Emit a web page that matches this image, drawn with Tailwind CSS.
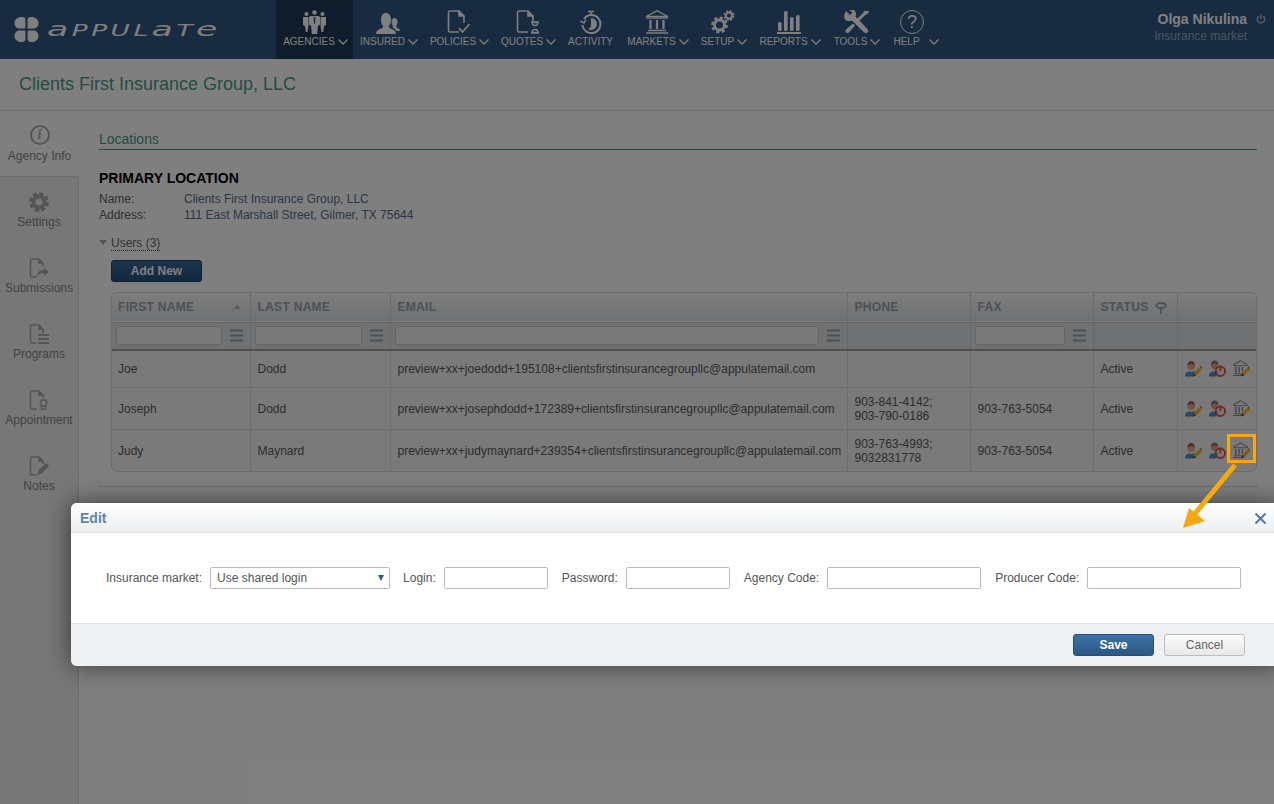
<!doctype html>
<html lang="en">
<head>
<meta charset="utf-8">
<title>Appulate</title>
<script src="https://cdn.jsdelivr.net/npm/@tailwindcss/browser@4"></script>
</head>
<body class="relative h-[804px] w-[1274px] overflow-hidden bg-white font-['Liberation_Sans',Arial,sans-serif] text-xs text-[#666]">

<svg class="absolute h-0 w-0" aria-hidden="true">
  <symbol id="person-edit" viewBox="0 0 18 18">
    <path d="M0 17.500c0-4 3-5 5-5.500l2 1 2-1c1 .3 2 .8 3 1.800l-3 3.700z" fill="#4a90d0"/>
    <circle cx="6.500" cy="6.500" r="4" fill="#e2ac86"/>
    <path d="M2.500 5.500c0-3 2-4.500 4-4.500s4 1.500 4 4.500c-2-1.500-5-1.500-8 0z" fill="#946a4e"/>
    <path d="M8 17.500l1-3.800 6-6 2.800 2.800-6 6z" fill="#f5bc2c"/>
    <path d="M8 17.500l1-3.800 2.800 2.800z" fill="#555"/>
    <path d="M15.500 7.200l1-1 2.500 2.500-1 1.200z" fill="#e2604f"/>
  </symbol>
  <symbol id="person-off" viewBox="0 0 18 18">
    <path d="M0 17.500c0-4 3-5 4.500-5.500l2 1 2-1 1 .5-2 5z" fill="#4a90d0"/>
    <circle cx="6" cy="5.500" r="4" fill="#d8aa8c"/>
    <path d="M2 5c0-3 2-4.500 4-4.500s4 1.500 4 4.500c-2-1.500-5-1.500-8 0z" fill="#8c7a6e"/>
    <circle cx="12" cy="12" r="5" fill="none" stroke="#e8503f" stroke-width="2"/>
    <path d="M12 5.500V12" stroke="#e8503f" stroke-width="2"/>
  </symbol>
  <symbol id="bank-edit" viewBox="0 0 18 18">
    <path d="M8 .8L1 4.800V6h14V4.800z" fill="none" stroke="#8c8c8c" stroke-width="1.100"/>
    <path d="M3 7.500v6M6.500 7.500v6M10 7.500v5" stroke="#8c8c8c" stroke-width="1.500"/>
    <path d="M1 14.500h9M0 16.500h9" stroke="#8c8c8c" stroke-width="1.100"/>
    <path d="M8.500 17.500l1-3.800 6-6 2.500 2.500-6 6z" fill="#f5bc2c"/>
    <path d="M8.500 17.500l1-3.800 2.500 2.500z" fill="#555"/>
    <path d="M15.500 7.700l1-1 2 2-1 1.200z" fill="#e2604f"/>
  </symbol>
  <symbol id="menu-lines" viewBox="0 0 13 13">
    <path d="M0 1.500h13M0 6.500h13M0 11.500h13" stroke="#9a9ea3" stroke-width="2"/>
  </symbol>
  <symbol id="chev" viewBox="0 0 10 6">
    <path d="M.5.500L5 5 9.500.500" fill="none" stroke="#fff" stroke-width="1.300"/>
  </symbol>
</svg>

<header class="flex h-[59px] bg-[#305682]">
  <div class="flex w-[276px] items-center pl-[14px]">
    <svg class="h-[25px] w-[25px]" viewBox="1 1 23 23" fill="#fff" aria-hidden="true">
      <path d="M11.500 11.500H5.500a5 5 0 0 1-1-9.500 5 5 0 0 1 7 .5z"/>
      <path d="M13.500 11.500h6a5 5 0 0 0 1-9.500 5 5 0 0 0-7 .5z"/>
      <path d="M11.500 13.500H5.500a5 5 0 0 0-1 9.500 5 5 0 0 0 7-.5z"/>
      <path d="M13.500 13.500h6a5 5 0 0 1 1 9.500 5 5 0 0 1-7-.5z"/>
    </svg>
    <span class="ml-2 origin-left whitespace-nowrap font-['DejaVu_Sans',sans-serif] text-[19px] italic leading-none tracking-[2.500px] text-white [transform:scale(1.39,.8)]"><span class="text-[25px]">a</span>PPUL<span class="text-[25px]">a</span>T<span class="text-[25px]">e</span></span>
  </div>
  <nav class="flex text-[10px] uppercase text-white [&>a>span:has(svg)]:ml-[2px]">
    <a class="flex w-[77px] flex-col items-center bg-[#1c3856] pt-[10px]">
      <svg class="h-[24px] w-[25px]" viewBox="0 0 25 24" fill="#fff" aria-hidden="true">
        <circle cx="12.500" cy="2.500" r="2.300"/><circle cx="4.500" cy="4" r="2"/><circle cx="20.500" cy="4" r="2"/>
        <path d="M8.500 6h8l1.500 1v8l-2 .5-.8 8.500H9.800L9 15.500 7 15V7z"/>
        <path d="M1 7h5.500v9l-1 6H3.800l-.8-6-2-1zM18.500 7H24v8l-2 1-.8 6h-1.700l-1-6z"/>
        <path d="M11.500 6.500l1 1 1-1-.5 7-.5 1-.5-1z" fill="#305682"/>
      </svg>
      <span class="mt-[2px] flex items-center gap-[3px] leading-[12px]">Agencies<svg class="h-[6px] w-[10px]"><use href="#chev"/></svg></span>
    </a>
    <a class="flex w-[70px] flex-col items-center pt-[13px]">
      <svg class="h-[21px] w-[24px]" viewBox="0 0 24 21" fill="#fff" aria-hidden="true">
        <path d="M0 21c0-4 4-5 6.500-6 1-.8.700-2 .2-2.500C5.500 11 5 9 5 6.500 5 2.500 7 0 10 0s5 2.500 5 6.500c0 2.500-.5 4.500-1.700 6-.5.500-.8 1.700.2 2.500 2.500 1 6.500 2 6.500 6z"/>
        <path d="M17 14.500c-.6-.5-.5-1.300 0-1.800-1-1-1.400-2.300-1.400-3.700 0-2.500 1.300-4 3-4s3 1.500 3 4c0 1.500-.5 2.700-1.400 3.700.4.500.5 1.300 0 1.800 1.500.5 3.800 1 3.800 3.500h-4c-.5-1.800-2-3-3.500-3.500z"/>
      </svg>
      <span class="mt-[2px] flex items-center gap-[3px] leading-[12px]">Insured<svg class="h-[6px] w-[10px]"><use href="#chev"/></svg></span>
    </a>
    <a class="flex w-[71px] flex-col items-center pt-[10px]">
      <svg class="h-[24px] w-[24px]" viewBox="0 0 24 24" fill="none" stroke="#fff" stroke-width="1.600" aria-hidden="true">
        <path d="M12 22H3q-1.500 0-1.500-1.500V2.500Q1.500 1 3 1h9l5 5v7"/><path d="M12 1v5h5" fill="#fff"/>
        <path d="M12 18l3.500 4 7-8" stroke-width="1.800"/>
      </svg>
      <span class="mt-[2px] flex items-center gap-[3px] leading-[12px]">Policies<svg class="h-[6px] w-[10px]"><use href="#chev"/></svg></span>
    </a>
    <a class="flex w-[67px] flex-col items-center pt-[10px]">
      <svg class="h-[24px] w-[24px]" viewBox="0 0 24 24" fill="none" stroke="#fff" stroke-width="1.600" aria-hidden="true">
        <path d="M12 22H3q-1.500 0-1.500-1.500V2.500Q1.500 1 3 1h9l5 5v5"/><path d="M12 1v5h5" fill="#fff"/>
        <path d="M15 12h8M15 23h8M16 12.500c0 4 6 4 6 0zM16 22.500c0-4 6-4 6 0z" stroke-width="1.300"/>
      </svg>
      <span class="mt-[2px] flex items-center gap-[3px] leading-[12px]">Quotes<svg class="h-[6px] w-[10px]"><use href="#chev"/></svg></span>
    </a>
    <a class="flex w-[59px] flex-col items-center pt-[10px]">
      <svg class="h-[24px] w-[22px]" viewBox="0 0 22 24" fill="none" stroke="#fff" stroke-width="2" aria-hidden="true">
        <path d="M8 1.500h6M11 1.500v3" stroke-width="1.500"/>
        <path d="M4 9a9 9 0 1 1-1.500 6"/>
        <path d="M.5 11l3.500 2 2-3.500" stroke-width="1.500"/>
        <path d="M11 8a6 6 0 0 1 0 12c-2 0-3-1-3-1 3-1 3-3 3-5z" fill="#fff" stroke="none"/>
      </svg>
      <span class="mt-[2px] leading-[12px]">Activity</span>
    </a>
    <a class="flex w-[74px] flex-col items-center pt-[10px]">
      <svg class="h-[24px] w-[24px]" viewBox="0 0 24 24" fill="none" stroke="#fff" aria-hidden="true">
        <path d="M12 .8L1 6.500h22z" stroke-width="1.300"/>
        <path d="M1 8h22" stroke-width="1.300"/>
        <path d="M5.500 10v9M12 10v9M18.500 10v9" stroke-width="2.200"/>
        <path d="M3 20.500h18M1 23h22" stroke-width="1.300"/>
      </svg>
      <span class="mt-[2px] flex items-center gap-[3px] leading-[12px]">Markets<svg class="h-[6px] w-[10px]"><use href="#chev"/></svg></span>
    </a>
    <a class="flex w-[58px] flex-col items-center pt-[10px]">
      <svg class="h-[24px] w-[24px]" viewBox="0 0 24 24" fill="none" stroke="#fff" aria-hidden="true">
        <circle cx="8.500" cy="15" r="5" stroke-width="3"/>
        <circle cx="8.500" cy="15" r="7.200" stroke-width="2.400" stroke-dasharray="3.200 2.450"/>
        <circle cx="18" cy="5.500" r="3" stroke-width="1.800"/>
        <circle cx="18" cy="5.500" r="4.600" stroke-width="1.600" stroke-dasharray="2.200 1.410"/>
      </svg>
      <span class="mt-[2px] flex items-center gap-[3px] leading-[12px]">Setup<svg class="h-[6px] w-[10px]"><use href="#chev"/></svg></span>
    </a>
    <a class="flex w-[74px] flex-col items-center pt-[10px]">
      <svg class="h-[24px] w-[24px]" viewBox="0 0 24 24" fill="#fff" aria-hidden="true">
        <rect x="1" y="12" width="3.600" height="9" rx="1.500"/><rect x="7" y="1" width="3.600" height="20" rx="1.500"/>
        <rect x="13" y="7" width="3.600" height="14" rx="1.500"/><rect x="19" y="5" width="3.600" height="16" rx="1.500"/>
        <rect x="0" y="22" width="24" height="2"/>
      </svg>
      <span class="mt-[2px] flex items-center gap-[3px] leading-[12px]">Reports<svg class="h-[6px] w-[10px]"><use href="#chev"/></svg></span>
    </a>
    <a class="flex w-[60px] flex-col items-center pt-[10px]">
      <svg class="h-[24px] w-[25px]" viewBox="0 0 25 24" fill="#fff" aria-hidden="true">
        <path d="M2 1l4 4 2.500-2.500-4-3c3-1 7 .5 7.500 4 .2 1.300-.2 2.500-.5 3L23 18.500c1.500 1.500 1.500 3 .5 4s-3 1-4-.5L8 10.500c-3 1.300-6 .5-7.500-2C-.3 6.500.5 3 2 1z"/>
        <path d="M24 0l-1-1 2 3-2 2.500-1.500.3L13 13l-2-2 8.500-8.500L20 1zM9 13.500l2 2-5.500 6.500c-1 1.200-2.500 1.500-3.500.5s-.7-2.500.5-3.500z"/>
      </svg>
      <span class="mt-[2px] flex items-center gap-[3px] leading-[12px]">Tools<svg class="h-[6px] w-[10px]"><use href="#chev"/></svg></span>
    </a>
    <a class="flex w-[58px] flex-col items-center pt-[10px]">
      <span class="-ml-[6px] flex h-[24px] w-[24px] items-center justify-center rounded-full border-[1.500px] border-white text-[18px] leading-none">?</span>
      <span class="mt-[2px] flex items-center gap-[9px] leading-[12px]">Help<svg class="h-[6px] w-[10px]"><use href="#chev"/></svg></span>
    </a>
  </nav>
  <div class="relative ml-auto flex flex-col items-end pr-[27px] pt-[11px]">
    <span class="text-sm font-bold leading-[16px] text-white">Olga Nikulina</span>
    <span class="mt-[2px] text-xs leading-[14px] text-white/50">Insurance market</span>
    <svg class="absolute right-[8px] top-[14px] h-[10px] w-[10px]" viewBox="0 0 10 10" fill="none" stroke="#fff" stroke-opacity=".6" stroke-width="1.500" aria-hidden="true">
      <path d="M5 .5v4.500M2.800 2.200a3.700 3.700 0 1 0 4.400 0"/>
    </svg>
  </div>
</header>

<div class="flex h-[52px] items-center border-b border-[#ddd] pb-[1px] pl-[19px] text-lg text-[#4a9886]">Clients First Insurance Group, LLC</div>

<div class="flex h-[693px]">
  <aside class="flex w-[79px] shrink-0 flex-col text-center leading-[14px] text-[#888]">
    <a class="flex h-[65px] flex-col items-center pt-[14px]">
      <span class="flex h-[20px] w-[20px] items-center justify-center rounded-full border-2 border-[#aaa] font-['Liberation_Serif',serif] text-[14px] font-bold italic leading-none text-[#aaa]">i</span>
      <span class="mt-[4px]">Agency Info</span>
    </a>
    <div class="flex-1 rounded-tr-[3px] border-r border-t border-[#d8d8d8] bg-[#eee]">
      <a class="flex h-[66px] flex-col items-center pt-[15px]">
        <svg class="h-[20px] w-[20px]" viewBox="0 0 20 20" fill="none" stroke="#aaa" aria-hidden="true">
          <circle cx="10" cy="10" r="5.500" stroke-width="4"/>
          <circle cx="10" cy="10" r="8.500" stroke-width="3" stroke-dasharray="4.200 2.480"/>
        </svg>
        <span class="mt-[3px]">Settings</span>
      </a>
      <a class="flex h-[66px] flex-col items-center pt-[15px]">
        <svg class="h-[20px] w-[20px]" viewBox="0 0 20 20" fill="none" stroke="#aaa" stroke-width="1.600" aria-hidden="true">
          <path d="M8 19H3q-1.500 0-1.500-1.500v-15Q1.500 1 3 1h7l4 4v3"/><path d="M10 1v4h4" fill="#aaa"/>
          <path d="M8 18c0-4 3-6 7-6V9.500l5 4.500-5 4v-3c-3 0-5 1-7 3z" fill="#aaa" stroke="none"/>
        </svg>
        <span class="mt-[3px]">Submissions</span>
      </a>
      <a class="flex h-[66px] flex-col items-center pt-[15px]">
        <svg class="h-[20px] w-[20px]" viewBox="0 0 20 20" fill="none" stroke="#aaa" stroke-width="1.600" aria-hidden="true">
          <path d="M7 19H3q-1.500 0-1.500-1.500v-15Q1.500 1 3 1h7l4 4v4"/><path d="M10 1v4h4" fill="#aaa"/>
          <path d="M9 11h11M9 15h11M9 19h11" stroke-width="1.800"/>
        </svg>
        <span class="mt-[3px]">Programs</span>
      </a>
      <a class="flex h-[66px] flex-col items-center pt-[15px]">
        <svg class="h-[20px] w-[20px]" viewBox="0 0 20 20" fill="none" stroke="#aaa" stroke-width="1.600" aria-hidden="true">
          <path d="M8 19H3q-1.500 0-1.500-1.500v-15Q1.500 1 3 1h7l4 4v3"/><path d="M10 1v4h4" fill="#aaa"/>
          <circle cx="14.500" cy="13" r="3.200"/><path d="M12.500 16v4l2-1.200 2 1.200v-4" stroke-width="1.200"/>
        </svg>
        <span class="mt-[3px]">Appointment</span>
      </a>
      <a class="flex h-[66px] flex-col items-center pt-[15px]">
        <svg class="h-[20px] w-[20px]" viewBox="0 0 20 20" fill="none" stroke="#aaa" stroke-width="1.600" aria-hidden="true">
          <path d="M7 19H3q-1.500 0-1.500-1.500v-15Q1.500 1 3 1h7l4 4v3"/><path d="M10 1v4h4" fill="#aaa"/>
          <path d="M8 19l1-4 8-8 3 3-8 8z" fill="#aaa" stroke="none"/>
        </svg>
        <span class="mt-[3px]">Notes</span>
      </a>
    </div>
  </aside>

  <main class="min-w-0 flex-1 pl-[20px] pr-[17px] pt-[20px]">
    <h2 class="border-b border-[#4a9886] pb-[2px] text-sm leading-[16px] text-[#4a9886]">Locations</h2>
    <h3 class="mt-[20px] text-sm font-bold uppercase leading-[16px] text-black">Primary Location</h3>
    <dl class="mt-[5px] grid grid-cols-[85px_1fr] leading-[16px]">
      <dt class="text-[#5e5e5e]">Name:</dt><dd class="text-[#56708c]">Clients First Insurance Group, LLC</dd>
      <dt class="text-[#5e5e5e]">Address:</dt><dd class="text-[#56708c]">111 East Marshall Street, Gilmer, TX 75644</dd>
    </dl>
    <div class="mt-[13px] flex items-center leading-[14px] text-[#666]">
      <span class="mb-[2px] mr-[3px] h-0 w-0 border-x-[4.500px] border-t-[5px] border-x-transparent border-t-[#aaa]"></span>
      <span class="ml-[1px] border-b border-dotted border-[#333]">Users (3)</span>
    </div>
    <button class="ml-[12px] mt-[9px] block h-[22px] w-[91px] rounded-[3px] border border-[#1d4468] bg-gradient-to-b from-[#37699a] to-[#224f7c] text-xs font-bold text-white">Add New</button>

    <div class="ml-[12px] mt-[10px] w-[1146px] overflow-hidden rounded-[6px] border border-[#d6d9dc] bg-[#f4f4f4]">
      <table class="w-full table-fixed border-collapse">
        <colgroup><col class="w-[138px]"><col class="w-[140px]"><col class="w-[457px]"><col class="w-[123px]"><col class="w-[123px]"><col class="w-[84px]"><col></colgroup>
        <thead>
          <tr class="h-[29px] border-b border-[#c4c8cc] bg-gradient-to-b from-[#fdfdfd] to-[#dcdfe2] text-left font-bold uppercase tracking-[.3px] text-[#9aa2ab] [&>th]:border-r [&>th]:border-[#d6d9dc] [&>th]:pl-[7px] [&>th]:font-bold [&>th:first-child]:pl-[6px]">
            <th class="relative">First Name<span class="absolute right-[9px] top-[12px] h-0 w-0 border-x-[4px] border-b-[4px] border-x-transparent border-b-[#bbb]"></span></th>
            <th>Last Name</th><th>Email</th><th>Phone</th><th>Fax</th>
            <th class="relative">Status<svg class="absolute right-[10px] top-[9px] h-[12px] w-[12px]" viewBox="0 0 12 12" fill="none" stroke="#9aa2ab" stroke-width="1.800" aria-hidden="true"><ellipse cx="6" cy="3.500" rx="4.800" ry="2.500"/><path d="M6 6v6"/></svg></th>
            <th class="!border-r-0"></th>
          </tr>
          <tr class="h-[28px] border-b-2 border-[#9b9ea2] bg-[#dfe2e5] [&>th]:border-r [&>th]:border-[#d0d3d6] [&>th]:pl-[4px] [&>th]:pr-[7px]">
            <th><div class="flex items-center gap-[8px]"><input class="h-[19px] min-w-0 flex-1 rounded-[3px] border border-[#c8cbce] bg-[#f3f3f3]" aria-label="First name filter"><svg class="h-[13px] w-[13px] shrink-0"><use href="#menu-lines"/></svg></div></th>
            <th><div class="flex items-center gap-[8px]"><input class="h-[19px] min-w-0 flex-1 rounded-[3px] border border-[#c8cbce] bg-[#f3f3f3]" aria-label="Last name filter"><svg class="h-[13px] w-[13px] shrink-0"><use href="#menu-lines"/></svg></div></th>
            <th><div class="flex items-center gap-[8px]"><input class="h-[19px] min-w-0 flex-1 rounded-[3px] border border-[#c8cbce] bg-[#f3f3f3]" aria-label="Email filter"><svg class="h-[13px] w-[13px] shrink-0"><use href="#menu-lines"/></svg></div></th>
            <th></th>
            <th><div class="flex items-center gap-[8px]"><input class="h-[19px] min-w-0 flex-1 rounded-[3px] border border-[#c8cbce] bg-[#f3f3f3]" aria-label="Fax filter"><svg class="h-[13px] w-[13px] shrink-0"><use href="#menu-lines"/></svg></div></th>
            <th></th>
            <th class="!border-r-0"></th>
          </tr>
        </thead>
        <tbody class="leading-[14px] text-[#5a5a5a] [&_td]:border-r [&_td]:border-[#dadcde] [&_td]:pl-[7px] [&_td:first-child]:pl-[6px]">
          <tr class="h-[37px] border-b border-[#dadcde]">
            <td>Joe</td><td>Dodd</td><td class="whitespace-nowrap">preview+xx+joedodd+195108+clientsfirstinsurancegroupllc@appulatemail.com</td><td></td><td></td><td>Active</td>
            <td class="!border-r-0"><div class="flex gap-[7px]"><svg class="h-[17px] w-[17px]"><use href="#person-edit"/></svg><svg class="h-[17px] w-[17px]"><use href="#person-off"/></svg><svg class="h-[17px] w-[17px]"><use href="#bank-edit"/></svg></div></td>
          </tr>
          <tr class="h-[42px] border-b border-[#dadcde] [&>td]:pt-[1px]">
            <td>Joseph</td><td>Dodd</td><td class="whitespace-nowrap">preview+xx+josephdodd+172389+clientsfirstinsurancegroupllc@appulatemail.com</td><td>903-841-4142;<br>903-790-0186</td><td>903-763-5054</td><td>Active</td>
            <td class="!border-r-0"><div class="flex gap-[7px]"><svg class="h-[17px] w-[17px]"><use href="#person-edit"/></svg><svg class="h-[17px] w-[17px]"><use href="#person-off"/></svg><svg class="h-[17px] w-[17px]"><use href="#bank-edit"/></svg></div></td>
          </tr>
          <tr class="h-[42px] [&>td]:pt-[1px]">
            <td>Judy</td><td>Maynard</td><td class="whitespace-nowrap">preview+xx+judymaynard+239354+clientsfirstinsurancegroupllc@appulatemail.com</td><td>903-763-4993;<br>9032831778</td><td>903-763-5054</td><td>Active</td>
            <td class="!border-r-0"><div class="flex gap-[7px]"><svg class="h-[17px] w-[17px]"><use href="#person-edit"/></svg><svg class="h-[17px] w-[17px]"><use href="#person-off"/></svg><svg class="h-[17px] w-[17px]"><use href="#bank-edit"/></svg></div></td>
          </tr>
        </tbody>
      </table>
    </div>
    <div class="mt-[14px] border-b border-dotted border-[#bbb]"></div>
  </main>
</div>

<div class="absolute inset-0 bg-black/50"></div>

<section class="absolute left-[71px] top-[503px] w-[1210px] overflow-hidden rounded-l-[6px] bg-white shadow-[0_0_24px_rgba(0,0,0,.55)]">
  <div class="flex h-[30px] items-center border-b border-[#dcdfe3] bg-gradient-to-b from-white to-[#eceef0] pl-[9px] text-sm font-bold text-[#5c86ad]">Edit
    <svg class="absolute left-[1184px] top-[10px] h-[11px] w-[11px]" viewBox="0 0 11 11" fill="none" stroke="#4d7ba6" stroke-width="2" aria-hidden="true"><path d="M.5.500l10 10M10.500.500l-10 10"/></svg>
  </div>
  <div class="flex h-[90px] items-center pl-[35px] text-xs text-[#555]">
    <label>Insurance market:</label>
    <div class="relative ml-[8px] flex h-[22px] w-[180px] items-center rounded-[2px] border border-[#bbb] pl-[6px] text-[#555]">Use shared login
      <span class="absolute right-[5px] top-[7px] h-0 w-0 border-x-[3.500px] border-t-[6px] border-x-transparent border-t-[#2f5a85]"></span>
    </div>
    <label class="ml-[13px]">Login:</label>
    <input class="ml-[8px] h-[22px] w-[104px] rounded-[2px] border border-[#bbb]" aria-label="Login">
    <label class="ml-[14px]">Password:</label>
    <input class="ml-[8px] h-[22px] w-[104px] rounded-[2px] border border-[#bbb]" aria-label="Password">
    <label class="ml-[14px]">Agency Code:</label>
    <input class="ml-[8px] h-[22px] w-[154px] rounded-[2px] border border-[#bbb]" aria-label="Agency Code">
    <label class="ml-[14px]">Producer Code:</label>
    <input class="ml-[8px] h-[22px] w-[154px] rounded-[2px] border border-[#bbb]" aria-label="Producer Code">
  </div>
  <div class="flex h-[43px] items-center gap-[10px] border-t border-[#dcdfe3] bg-[#eff0f2] pl-[1002px]">
    <button class="h-[22px] w-[81px] rounded-[3px] border border-[#24507c] bg-gradient-to-b from-[#3c73a8] to-[#2b5783] text-xs font-bold text-white">Save</button>
    <button class="h-[22px] w-[81px] rounded-[3px] border border-[#bdbdbd] bg-gradient-to-b from-[#fafafa] to-[#e8e8e8] text-xs text-[#666]">Cancel</button>
  </div>
</section>

<div class="absolute left-[1227px] top-[434px] h-[29px] w-[29px] border-[3px] border-[#f7a70f]"></div>
<svg class="absolute left-[1175px] top-[460px] h-[75px] w-[70px]" viewBox="0 0 70 75" fill="none" aria-hidden="true">
  <path d="M60 5L18 56" stroke="#f7a70f" stroke-width="5"/>
  <path d="M8 68l6-20 16 13z" fill="#f7a70f"/>
</svg>

</body>
</html>
